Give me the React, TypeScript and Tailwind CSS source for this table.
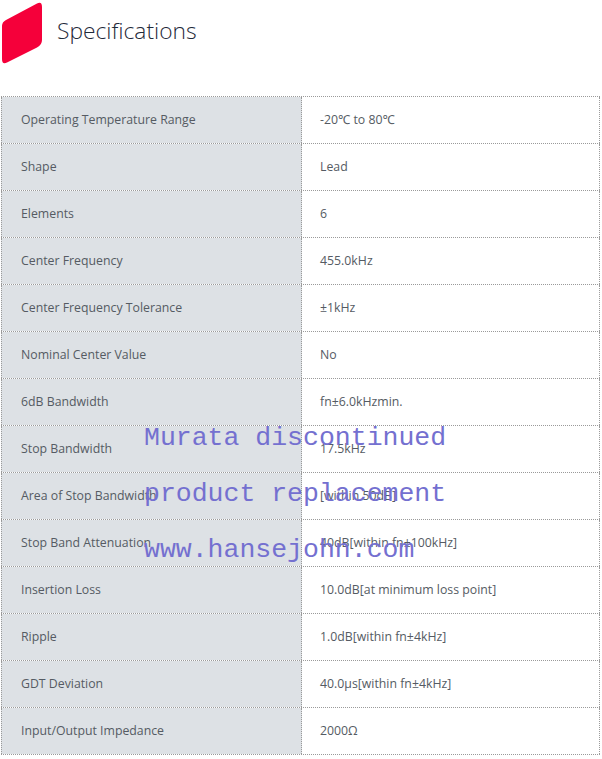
import React from 'react';

const specs: [string, string][] = [
  ['Operating Temperature Range', '-20℃ to 80℃'],
  ['Shape', 'Lead'],
  ['Elements', '6'],
  ['Center Frequency', '455.0kHz'],
  ['Center Frequency Tolerance', '±1kHz'],
  ['Nominal Center Value', 'No'],
  ['6dB Bandwidth', 'fn±6.0kHzmin.'],
  ['Stop Bandwidth', '17.5kHz'],
  ['Area of Stop Bandwidth', '[within 50dB]'],
  ['Stop Band Attenuation', '40dB[within fn±100kHz]'],
  ['Insertion Loss', '10.0dB[at minimum loss point]'],
  ['Ripple', '1.0dB[within fn±4kHz]'],
  ['GDT Deviation', '40.0μs[within fn±4kHz]'],
  ['Input/Output Impedance', '2000Ω'],
];

export default function App() {
  return (
    <div className="relative w-[602px] h-[759px] bg-white font-['Open_Sans','Noto_Sans',sans-serif] overflow-hidden">
      <div className="flex items-center h-[66px]">
        <svg width="46" height="66" viewBox="0 0 46 66">
          <path
            d="M6 20 L37 3.5 Q42 1 42 7 L42 40 Q42 45 37 47.5 L7 62.5 Q2 65 2 59 L2 26 Q2 22 6 20 Z"
            fill="#f5003a"
          />
        </svg>
        <h1 className="ml-[11px] text-[22.8px] text-[#1f2a3a] font-light -mt-[4px]">Specifications</h1>
      </div>

      <div className="mt-[30px] mx-[1px] w-[599px] border-b border-dotted border-[#9a9a9a]">
        {specs.map(([k, v]) => (
          <div key={k} className="flex h-[47px] border-t border-dotted border-[#9a9a9a] text-[12.3px] text-[#555b63]">
            <div className="w-[301px] bg-[#dde1e5] border-l border-r border-dotted border-[#9a9a9a] flex items-center pl-[19px]">
              {k}
            </div>
            <div className="flex-1 border-r border-dotted border-[#9a9a9a] flex items-center pl-[18px]">{v}</div>
          </div>
        ))}
      </div>

      <div className="absolute left-[144px] top-[424px] flex flex-col gap-[28px] font-['Liberation_Mono',monospace] text-[26.5px] leading-[28px] text-[#7470d0] pointer-events-none">
        <div>Murata discontinued</div>
        <div>product replacement</div>
        <div>www.hansejohn.com</div>
      </div>
    </div>
  );
}
